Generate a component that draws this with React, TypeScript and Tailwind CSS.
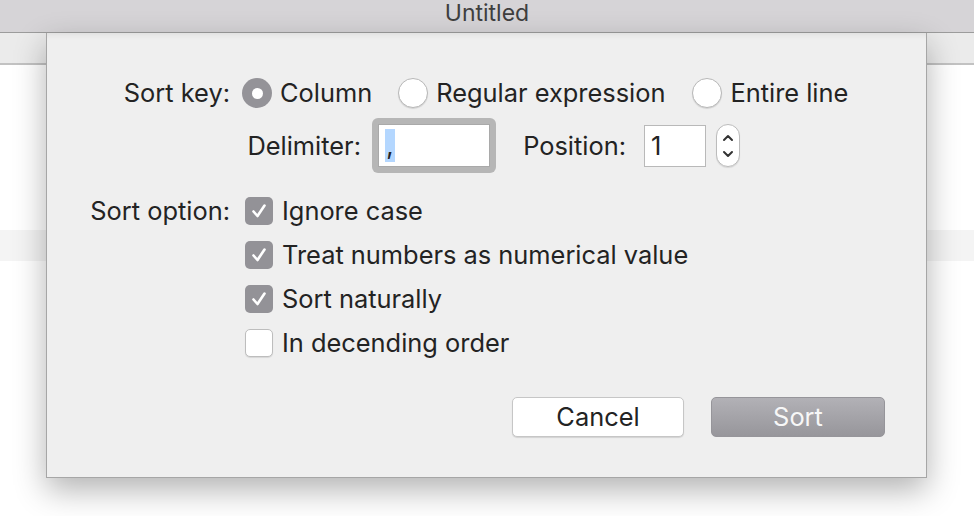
import React from "react";

const font = { fontFamily: "Inter, 'Liberation Sans', sans-serif" };

function Radio({ checked, label, className = "" }: { checked?: boolean; label: string; className?: string }) {
  return (
    <div className={"flex items-center " + className}>
      {checked ? (
        <div className="w-[30px] h-[30px] rounded-full bg-[#949398] flex items-center justify-center">
          <div className="w-[11px] h-[11px] rounded-full bg-white" />
        </div>
      ) : (
        <div className="w-[30px] h-[30px] rounded-full bg-white border border-[#b8b8b8] shadow-[0_1px_1px_rgba(0,0,0,0.12)]" />
      )}
      <span className="ml-[8px]">{label}</span>
    </div>
  );
}

function Check({ checked, label }: { checked?: boolean; label: string }) {
  return (
    <div className="h-[44px] flex items-center">
      {checked ? (
        <div className="w-[28px] h-[28px] rounded-[5px] bg-[#939297] flex items-center justify-center">
          <svg width="18" height="18" viewBox="0 0 18 18">
            <path d="M3.5 9.5 L7.5 14 L14.5 3.5" fill="none" stroke="white" strokeWidth="2.6" strokeLinecap="round" strokeLinejoin="round" />
          </svg>
        </div>
      ) : (
        <div className="w-[28px] h-[28px] rounded-[5px] bg-white border border-[#bdbdbd] shadow-[0_1px_1px_rgba(0,0,0,0.1)]" />
      )}
      <span className="ml-[9px]">{label}</span>
    </div>
  );
}

export default function App() {
  return (
    <div className="relative w-[974px] h-[516px] overflow-hidden bg-white text-[#232323]" style={font}>
      {/* title bar */}
      <div className="h-[33px] bg-[#d6d4d7] border-b border-[#9c9c9c] flex justify-center items-start">
        <span className="text-[23px] leading-[26px] text-[#3f3f3f]">Untitled</span>
      </div>
      {/* toolbar */}
      <div className="h-[32px] bg-[#ebebeb] border-b-2 border-[#c2c2c2]" />
      <div className="h-[165px]" />
      <div className="h-[31px] bg-[#f4f4f4]" />

      {/* sheet */}
      <div className="absolute left-[46px] top-[33px] w-[881px] h-[445px] bg-[#efefef] border-x border-b border-[#a6a6a6] shadow-[0_12px_30px_rgba(0,0,0,0.3),inset_0_8px_6px_-6px_rgba(0,0,0,0.07)] text-[25.4px] leading-none flex flex-col">
        {/* row 1 */}
        <div className="mt-[43px] h-[34px] flex items-center">
          <div className="w-[183px] text-right">Sort key:</div>
          <Radio checked label="Column" className="ml-[12px]" />
          <Radio label="Regular expression" className="ml-[26px]" />
          <Radio label="Entire line" className="ml-[27px]" />
        </div>
        {/* row 2 */}
        <div className="mt-[8px] h-[55px] flex items-center pl-[195px]">
          <div className="w-[119px] text-right">Delimiter:</div>
          <div className="ml-[11px] w-[124px] h-[55px] rounded-[6px] bg-[#b6b6b6] p-[6px] flex">
            <div className="flex-1 bg-white border border-[#a9a9a9] flex items-center pl-[6px]">
              <span className="bg-[#b4d7ff] h-[33px] w-[10px] flex items-end justify-center pb-[4px] leading-none">,</span>
            </div>
          </div>
          <div className="ml-[27px] w-[103px] text-right">Position:</div>
          <div className="ml-[18px] w-[62px] h-[42px] bg-white border border-[#b9b9b9] flex items-center pl-[6px]">1</div>
          <div className="ml-[10px] w-[24px] h-[43px] rounded-full bg-white border border-[#bcbcbc] shadow-[0_1px_1px_rgba(0,0,0,0.1)] flex flex-col items-center justify-center gap-[8px]">
            <svg width="12" height="8" viewBox="0 0 12 8">
              <path d="M2 6 L6 2 L10 6" fill="none" stroke="#333" strokeWidth="2" strokeLinecap="round" strokeLinejoin="round" />
            </svg>
            <svg width="12" height="8" viewBox="0 0 12 8">
              <path d="M2 2 L6 6 L10 2" fill="none" stroke="#333" strokeWidth="2" strokeLinecap="round" strokeLinejoin="round" />
            </svg>
          </div>
        </div>
        {/* sort options */}
        <div className="mt-[16px] flex">
          <div className="w-[183px] h-[44px] flex items-center justify-end">Sort option:</div>
          <div className="ml-[15px] flex flex-col">
            <Check checked label="Ignore case" />
            <Check checked label="Treat numbers as numerical value" />
            <Check checked label="Sort naturally" />
            <Check label="In decending order" />
          </div>
        </div>
        {/* buttons */}
        <div className="mt-[32px] flex justify-end pr-[41px] gap-[27px]">
          <button className="w-[172px] h-[40px] rounded-[5px] bg-white border border-[#c6c6c6] shadow-[0_1px_1px_rgba(0,0,0,0.12)] text-[25.4px] text-[#232323]" style={font}>
            Cancel
          </button>
          <button className="w-[174px] h-[40px] rounded-[5px] bg-gradient-to-b from-[#b2b1b6] to-[#97969b] border border-[#96959a] text-[25.4px] text-[#f7f7f7]" style={font}>
            Sort
          </button>
        </div>
      </div>
    </div>
  );
}
